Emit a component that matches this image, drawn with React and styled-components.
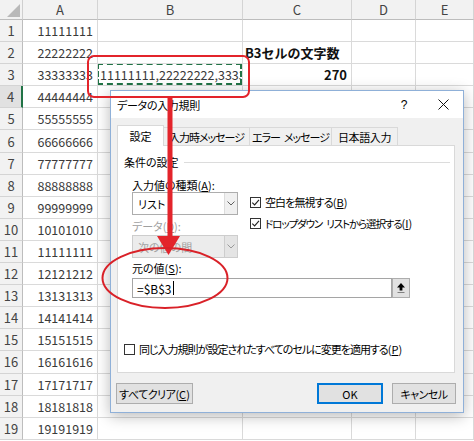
import React from "react";
import styled, { createGlobalStyle } from "styled-components";

const GlobalStyle = createGlobalStyle`
  html, body { margin: 0; padding: 0; background: #fff; }
  body { font-family: "Noto Sans CJK JP", "Noto Sans", sans-serif; }
  * { box-sizing: border-box; }
`;

// A列の値
const colA = [
  "11111111", "22222222", "33333333", "44444444", "55555555",
  "66666666", "77777777", "88888888", "99999999", "10101010",
  "11111111", "12121212", "13131313", "14141414", "15151515",
  "16161616", "17171717", "18181818", "19191919",
];
const COLS = ["A", "B", "C", "D", "E"];

// 特別なセルの中身
const special = {
  "C2": { text: "B3セルの文字数", bold: true },
  "B3": { text: "11111111,22222222,33333333,44444444", active: true },
  "C3": { text: "270", bold: true, align: "right" },
};

const App = () => {
  const rows = colA.map((a, i) => {
    const r = i + 1;
    return (
      <React.Fragment key={r}>
        <RowHead $current={r === 4}>{r}</RowHead>
        {COLS.map((c) => {
          const cell = c === "A" ? { text: a, align: "right" } : special[c + r] || {};
          return (
            <Cell key={c} $align={cell.align} $bold={cell.bold} $active={cell.active}>
              {cell.text}
            </Cell>
          );
        })}
      </React.Fragment>
    );
  });

  return (
    <Screen>
      <GlobalStyle />
      <Sheet>
        <Corner />
        {COLS.map((c) => (
          <ColHead key={c}>{c}</ColHead>
        ))}
        {rows}
      </Sheet>

      <Dialog>
        <TitleBar>
          <Title>データの入力規則</Title>
          <HelpBtn>?</HelpBtn>
          <CloseBtn>
            <svg width="11" height="11" viewBox="0 0 11 11">
              <path d="M0.5 0.5 L10.5 10.5 M10.5 0.5 L0.5 10.5" stroke="#111" strokeWidth="1" />
            </svg>
          </CloseBtn>
        </TitleBar>
        <Body>
          <TabStrip>
            <Tab $w={47} $selected>設定</Tab>
            <Tab $w={87}><Text $ls={-1}>入力時メッセージ</Text></Tab>
            <Tab $w={83}><Text $ls={-1}>エラー</Text><Text $ls={-1} $gap={4}>メッセージ</Text></Tab>
            <Tab $w={67}><Text $ls={-0.4}>日本語入力</Text></Tab>
          </TabStrip>
          <Panel>
            <GroupHead>
              <span>条件の設定</span>
              <GroupLine />
            </GroupHead>
            <Indent>
              <Label $top={9}>
                入力値の種類(<U>A</U>):
              </Label>
              <FieldRow>
                <LeftCol>
                  <Select>
                    <SelectText>リスト</SelectText>
                    <Chevron />
                  </Select>
                  <Label $top={4} $disabled>
                    データ(<U>D</U>):
                  </Label>
                  <Select $disabled $top={2}>
                    <SelectText>次の値の間</SelectText>
                    <Chevron $disabled />
                  </Select>
                </LeftCol>
                <RightCol>
                  <CheckRow>
                    <CheckBox checked />
                    <Text $ls={-0.9}>空白を無視する</Text>(<U>B</U>)
                  </CheckRow>
                  <CheckRow $top={7}>
                    <CheckBox checked />
                    <Text $ls={-1.1} $size={10.5}>ドロップダウン</Text>
                    <Text $ls={-1.1} $size={10.5} $gap={4}>リストから選択する</Text>(<U>I</U>)
                  </CheckRow>
                </RightCol>
              </FieldRow>
              <Label $top={3}>
                元の値(<U>S</U>):
              </Label>
              <InputRow>
                <TextInput>
                  =$B$3
                  <Caret />
                </TextInput>
                <RefButton>
                  <svg width="10" height="12" viewBox="0 0 10 12">
                    <path d="M5 1 L1 5.5 H3.6 V8.5 H6.4 V5.5 H9 Z" fill="#000" />
                    <path d="M1.5 10.5 H8.5" stroke="#808080" strokeWidth="1" />
                  </svg>
                </RefButton>
              </InputRow>
            </Indent>
            <ApplyRow>
              <CheckBox />
              <Text $ls={-1}>同じ入力規則が設定されたすべてのセルに変更を適用する</Text>(<U>P</U>)
            </ApplyRow>
          </Panel>
          <ButtonRow>
            <Button $w={77}>
              <Text $ls={-0.5}>すべてクリア</Text>(<U>C</U>)
            </Button>
            <ButtonGroup>
              <Button $w={66} $primary>OK</Button>
              <Button $w={64}><Text $ls={-0.5}>キャンセル</Text></Button>
            </ButtonGroup>
          </ButtonRow>
        </Body>
      </Dialog>

      {/* 赤い注釈（枠・矢印・楕円） */}
      <Marks width="474" height="441" viewBox="0 0 474 441">
        <rect x="88" y="56" width="161" height="41" rx="6" fill="none" stroke="#e3242b" strokeWidth="2" />
        <rect x="167.5" y="96" width="5" height="141" fill="#e3242b" />
        <path d="M157 236 L180 236 L168.5 255 Z" fill="#e3242b" />
        <ellipse cx="165" cy="278" rx="62.5" ry="30" fill="none" stroke="#d92128" strokeWidth="2" />
      </Marks>
    </Screen>
  );
};

const CheckBox = ({ checked }) => (
  <Box>
    {checked && (
      <svg width="9" height="9" viewBox="0 0 9 9">
        <path d="M1.3 4.6 L3.6 6.9 L8 1.8" fill="none" stroke="#222" strokeWidth="1.1" />
      </svg>
    )}
  </Box>
);

const Chevron = ({ $disabled }) => (
  <ArrowPart $disabled={$disabled}>
    <svg width="8" height="5" viewBox="0 0 8 5">
      <path d="M0.5 0.5 L4 4 L7.5 0.5" fill="none" stroke={$disabled ? "#9a9a9a" : "#606060"} strokeWidth="1" />
    </svg>
  </ArrowPart>
);

const Screen = styled.div`
  position: relative;
  width: 474px;
  height: 441px;
  overflow: hidden;
  background: #fff;
`;

// シート部分
const Sheet = styled.div`
  display: grid;
  grid-template-columns: 23px 75px 145px 109px 64px 58px;
  grid-template-rows: 20px repeat(19, 22.1px);
`;
const Corner = styled.div`
  position: relative;
  background: #f2f2f2;
  border-right: 1px solid #cfcfcf;
  border-bottom: 1px solid #bdbdbd;
  &::after {
    content: "";
    position: absolute;
    right: 2px;
    bottom: 2px;
    border-left: 13px solid transparent;
    border-bottom: 13px solid #b9b9b9;
  }
`;
const ColHead = styled.div`
  display: flex;
  align-items: center;
  justify-content: center;
  background: #f2f2f2;
  border-right: 1px solid #d4d4d4;
  border-bottom: 1px solid #bdbdbd;
  color: #444;
  font-size: 13px;
`;
const RowHead = styled.div`
  display: flex;
  align-items: center;
  justify-content: center;
  background: ${(p) => (p.$current ? "#e1e1e1" : "#f2f2f2")};
  border-right: ${(p) => (p.$current ? "2px solid #217346" : "1px solid #bdbdbd")};
  border-bottom: 1px solid #d4d4d4;
  color: #444;
  font-size: 13px;
`;
const Cell = styled.div`
  position: relative;
  display: flex;
  align-items: center;
  justify-content: ${(p) => (p.$align === "right" ? "flex-end" : "flex-start")};
  padding: 0 ${(p) => (p.$align === "right" ? "4px" : "2px")};
  border-right: 1px solid #dadada;
  border-bottom: 1px solid #dadada;
  overflow: hidden;
  white-space: nowrap;
  color: ${(p) => (p.$bold ? "#111" : "#3a3a3a")};
  font-size: ${(p) => (p.$bold ? "13px" : "12.5px")};
  font-weight: ${(p) => (p.$bold ? 700 : 400)};
  ${(p) =>
    p.$active &&
    `
    &::after {
      content: "";
      position: absolute;
      inset: -1px 0 0 -1px;
      border: 2px dashed #217346;
    }
  `}
`;

// ダイアログ
const Dialog = styled.div`
  position: absolute;
  left: 110px;
  top: 90px;
  width: 354px;
  height: 323px;
  display: flex;
  flex-direction: column;
  border: 1px solid #8fb0d8;
  background: #f0f0f0;
  box-shadow: 0 3px 14px rgba(0, 0, 0, 0.28);
  font-size: 11px;
  font-feature-settings: "palt";
  color: #000;
`;
const Text = styled.span`
  letter-spacing: ${(p) => p.$ls || 0}px;
  font-size: ${(p) => (p.$size ? `${p.$size}px` : "inherit")};
  margin-left: ${(p) => p.$gap || 0}px;
  white-space: nowrap;
`;
const TitleBar = styled.div`
  display: flex;
  align-items: center;
  height: 27px;
  padding-left: 6px;
  background: #fff;
`;
const Title = styled.div`
  flex: 1;
  font-size: 11px;
  letter-spacing: -0.3px;
`;
const HelpBtn = styled.div`
  width: 30px;
  text-align: center;
  font-size: 12px;
  font-family: "Liberation Sans", sans-serif;
`;
const CloseBtn = styled.div`
  display: flex;
  justify-content: center;
  width: 40px;
  margin-left: 4px;
`;
const Body = styled.div`
  flex: 1;
  display: flex;
  flex-direction: column;
  padding: 7px 8px 0 6px;
`;
const TabStrip = styled.div`
  display: flex;
  align-items: flex-end;
  height: 20px;
`;
const Tab = styled.div`
  position: relative;
  z-index: ${(p) => (p.$selected ? 1 : 0)};
  display: flex;
  align-items: center;
  justify-content: center;
  width: ${(p) => p.$w}px;
  height: ${(p) => (p.$selected ? "21px" : "18px")};
  margin-bottom: ${(p) => (p.$selected ? "-1px" : "0")};
  margin-left: ${(p) => (p.$selected ? "0" : "-1px")};
  background: ${(p) => (p.$selected ? "#fff" : "#f0f0f0")};
  border: 1px solid #d9d9d9;
  border-bottom: none;
  white-space: nowrap;
  overflow: hidden;
`;
const Panel = styled.div`
  display: flex;
  flex-direction: column;
  height: 228px;
  background: #fff;
  border: 1px solid #d9d9d9;
`;
const GroupHead = styled.div`
  display: flex;
  align-items: center;
  height: 14px;
  margin-top: 9px;
  padding-left: 6px;
`;
const GroupLine = styled.div`
  flex: 1;
  height: 1px;
  margin: 0 4px 0 5px;
  background: #dcdcdc;
`;
const Indent = styled.div`
  padding-left: 14px;
`;
const Label = styled.div`
  height: 14px;
  line-height: 14px;
  margin-top: ${(p) => p.$top || 0}px;
  color: ${(p) => (p.$disabled ? "#a0a0a0" : "#000")};
`;
const U = styled.span`
  text-decoration: underline;
`;
const FieldRow = styled.div`
  display: flex;
`;
const LeftCol = styled.div`
  width: 106px;
`;
const RightCol = styled.div`
  margin-left: 12px;
  padding-top: 3px;
`;
const Select = styled.div`
  display: flex;
  height: 23px;
  margin-top: ${(p) => p.$top || 0}px;
  background: ${(p) => (p.$disabled ? "#ececec" : "#fff")};
  border: 1px solid ${(p) => (p.$disabled ? "#cdcdcd" : "#adadad")};
  color: ${(p) => (p.$disabled ? "#a3a3a3" : "#000")};
`;
const SelectText = styled.div`
  flex: 1;
  display: flex;
  align-items: center;
  padding-left: 5px;
`;
const ArrowPart = styled.div`
  display: flex;
  align-items: center;
  justify-content: center;
  width: 13px;
  background: ${(p) => (p.$disabled ? "#e4e4e4" : "#f0f0f0")};
  border-left: 1px solid ${(p) => (p.$disabled ? "#cdcdcd" : "#dcdcdc")};
`;
const CheckRow = styled.div`
  display: flex;
  align-items: center;
  height: 14px;
  margin-top: ${(p) => p.$top || 0}px;
  white-space: nowrap;
`;
const Box = styled.div`
  display: flex;
  align-items: center;
  justify-content: center;
  width: 11px;
  height: 11px;
  margin-right: 4px;
  background: #fff;
  border: 1px solid #333;
`;
const InputRow = styled.div`
  display: flex;
  margin-top: 3px;
`;
const TextInput = styled.div`
  display: flex;
  align-items: center;
  width: 260px;
  height: 20px;
  padding-left: 4px;
  border: 1px solid #a5a5a5;
  font-size: 12px;
  font-feature-settings: normal;
`;
const Caret = styled.span`
  width: 1px;
  height: 14px;
  margin-left: 1px;
  background: #000;
`;
const RefButton = styled.div`
  display: flex;
  align-items: center;
  justify-content: center;
  width: 18px;
  height: 20px;
  background: #e1e1e1;
  border: 1px solid #adadad;
`;
const ApplyRow = styled(CheckRow)`
  margin-top: auto;
  margin-bottom: 16px;
  padding-left: 6px;
`;
const ButtonRow = styled.div`
  display: flex;
  justify-content: space-between;
  margin-top: 10px;
  margin-left: -1px;
`;
const ButtonGroup = styled.div`
  display: flex;
  gap: 9px;
  margin-right: -1px;
`;
const Button = styled.div`
  display: flex;
  align-items: center;
  justify-content: center;
  width: ${(p) => p.$w}px;
  height: 21px;
  background: #e1e1e1;
  border: 1px solid ${(p) => (p.$primary ? "#0078d7" : "#adadad")};
  box-shadow: ${(p) => (p.$primary ? "inset 0 0 0 1px #0078d7" : "none")};
  white-space: nowrap;
`;

const Marks = styled.svg`
  position: absolute;
  left: 0;
  top: 0;
  pointer-events: none;
`;

export default App;
